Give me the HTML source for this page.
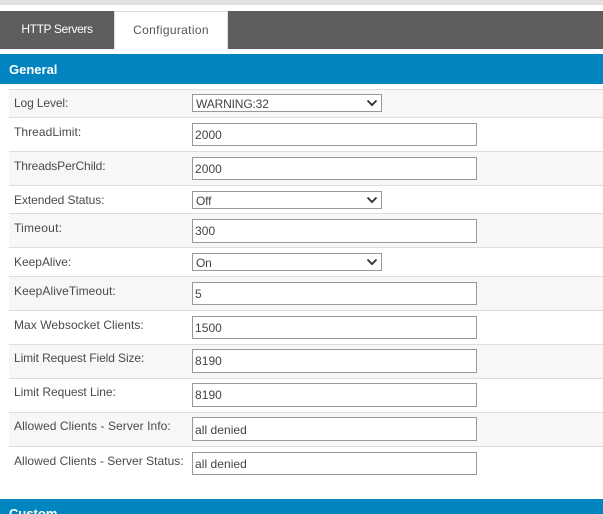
<!DOCTYPE html>
<html>
<head>
<meta charset="utf-8">
<style>
html,body{margin:0;padding:0}
body{width:603px;height:514px;position:relative;overflow:hidden;background:#fff;font-family:"Liberation Sans",sans-serif;color:#444}
div{position:absolute;box-sizing:border-box}
.row{left:9px;width:594px;border-top:1px solid #ddd}
.a{background:#f7f7f7}
.l{left:14px;font-size:12px;line-height:14px;white-space:nowrap;color:#4a4a4a}
.i{left:192px;width:285px;border:1px solid #999;background:#fff;font-size:12px;color:#444;padding-left:2px;letter-spacing:.05px}
.s{left:192px;width:190px;height:18px;border:1px solid #999;background:#fff;font-size:12px;line-height:18px;color:#444;padding-left:3px;letter-spacing:-.15px}
.s svg{position:absolute;right:2px;top:2px}
</style>
</head>
<body>
<div style="left:0;top:0;width:603px;height:5px;background:#e1e1e1"></div>
<div style="left:0;top:11px;width:603px;height:38px;background:#5e5e5e"></div>
<div style="left:114px;top:11px;width:114px;height:38px;background:#fff;border:1px solid #ddd;border-bottom:0;text-align:center;font-size:12px;line-height:36px;color:#555;letter-spacing:.33px">Configuration</div>
<div style="left:0;top:11px;width:114px;height:38px;text-align:center;font-size:12px;line-height:36px;color:#fff;letter-spacing:-.38px">HTTP Servers</div>
<div style="left:0;top:54px;width:603px;height:30px;background:#0085c1;color:#fff;font-weight:bold;font-size:13px;line-height:31px;padding-left:9px">General</div>

<div class="row a" style="top:89px;height:28px"></div>
<div class="row" style="top:117px;height:34px"></div>
<div class="row a" style="top:151px;height:34px"></div>
<div class="row" style="top:185px;height:28px"></div>
<div class="row a" style="top:213px;height:34px"></div>
<div class="row" style="top:247px;height:29px"></div>
<div class="row a" style="top:276px;height:34px"></div>
<div class="row" style="top:310px;height:34px"></div>
<div class="row a" style="top:344px;height:34px"></div>
<div class="row" style="top:378px;height:34px"></div>
<div class="row a" style="top:412px;height:34px"></div>
<div class="row" style="top:446px;height:34px"></div>

<div class="l" style="top:96px;letter-spacing:-.12px">Log Level:</div>
<div class="l" style="top:125px;letter-spacing:.05px">ThreadLimit:</div>
<div class="l" style="top:159px;letter-spacing:-.12px">ThreadsPerChild:</div>
<div class="l" style="top:193px;letter-spacing:-.06px">Extended Status:</div>
<div class="l" style="top:221px;letter-spacing:.25px">Timeout:</div>
<div class="l" style="top:255px;letter-spacing:-.02px">KeepAlive:</div>
<div class="l" style="top:284px;letter-spacing:.09px">KeepAliveTimeout:</div>
<div class="l" style="top:318px;letter-spacing:.06px">Max Websocket Clients:</div>
<div class="l" style="top:351px;letter-spacing:-.1px">Limit Request Field Size:</div>
<div class="l" style="top:385px;letter-spacing:-.05px">Limit Request Line:</div>
<div class="l" style="top:419px;letter-spacing:.07px">Allowed Clients - Server Info:</div>
<div class="l" style="top:454px;letter-spacing:.03px">Allowed Clients - Server Status:</div>

<div class="s" style="top:94px">WARNING:32<svg width="14" height="12" viewBox="0 0 14 12"><path d="M2.5 3.5L7 8L11.5 3.5" fill="none" stroke="#333" stroke-width="1.9"/></svg></div>
<div class="i" style="top:123px;height:23px;line-height:23px">2000</div>
<div class="i" style="top:157px;height:23px;line-height:23px">2000</div>
<div class="s" style="top:191px">Off<svg width="14" height="12" viewBox="0 0 14 12"><path d="M2.5 3.5L7 8L11.5 3.5" fill="none" stroke="#333" stroke-width="1.9"/></svg></div>
<div class="i" style="top:219px;height:24px;line-height:23px">300</div>
<div class="s" style="top:253px">On<svg width="14" height="12" viewBox="0 0 14 12"><path d="M2.5 3.5L7 8L11.5 3.5" fill="none" stroke="#333" stroke-width="1.9"/></svg></div>
<div class="i" style="top:282px;height:23px;line-height:23px">5</div>
<div class="i" style="top:316px;height:23px;line-height:22px">1500</div>
<div class="i" style="top:349px;height:24px;line-height:23px">8190</div>
<div class="i" style="top:383px;height:24px;line-height:22px">8190</div>
<div class="i" style="top:417px;height:24px;line-height:24px">all denied</div>
<div class="i" style="top:452px;height:23px;line-height:22px">all denied</div>

<div style="left:0;top:499px;width:603px;height:15px;background:#0085c1;color:#fff;font-weight:bold;font-size:13px;line-height:30px;padding-left:9px;overflow:hidden">Custom</div>
</body>
</html>
